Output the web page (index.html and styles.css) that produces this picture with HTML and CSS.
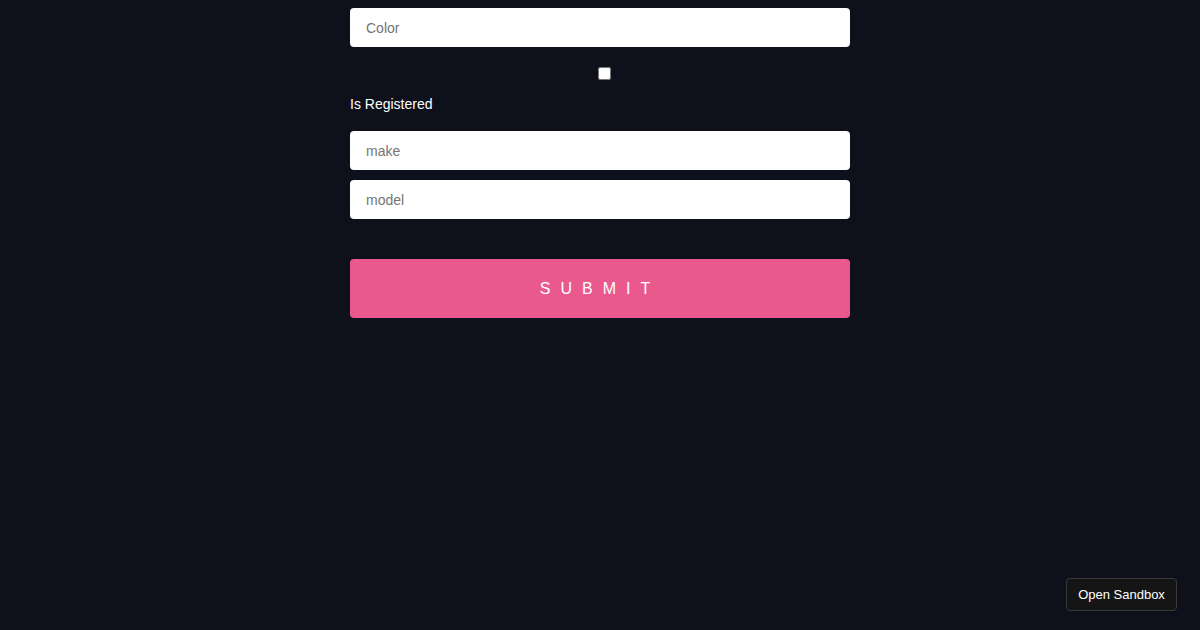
FILE: index.html
```html
<!DOCTYPE html>
<html>
<head>
<meta charset="utf-8">
<link rel="stylesheet" href="styles.css">
</head>
<body>
<form class="form">
  <input class="field" type="text" placeholder="Color">
  <div class="check-row"><input class="check" type="checkbox"></div>
  <label class="label">Is Registered</label>
  <input class="field" type="text" placeholder="make">
  <input class="field field-gap" type="text" placeholder="model">
  <button class="submit" type="button">SUBMIT</button>
</form>
<button class="sandbox" type="button">Open Sandbox</button>
</body>
</html>
```
FILE: styles.css
```css
html, body {
  margin: 0;
  padding: 0;
  background: #0e101b;
  height: 100%;
  font-family: "Liberation Sans", Arial, sans-serif;
}
.form {
  width: 500px;
  margin: 0 auto;
  padding-top: 8px;
  display: flex;
  flex-direction: column;
}
.field {
  box-sizing: border-box;
  height: 39px;
  width: 100%;
  border: none;
  border-radius: 4px;
  background: #fff;
  padding: 0 16px;
  font-family: "Liberation Sans", Arial, sans-serif;
  font-size: 14px;
  color: #333;
  margin: 0;
  outline: none;
}
.field::placeholder { color: #757575; }
.field-gap { margin-top: 10px; }
.check-row {
  display: flex;
  padding-left: 248px;
  margin-top: 20px;
  height: 13px;
}
.check {
  width: 13px;
  height: 13px;
  margin: 0;
}
.label {
  color: #fff;
  font-size: 14px;
  line-height: 16px;
  margin-top: 16px;
  margin-bottom: 19px;
}
.submit {
  margin-top: 40px;
  height: 59px;
  border: none;
  border-radius: 4px;
  background: #ea598e;
  color: #fff;
  font-family: "Liberation Sans", Arial, sans-serif;
  font-size: 16px;
  letter-spacing: 10px;
  padding: 0;
}
.sandbox {
  position: fixed;
  right: 23px;
  bottom: 19px;
  width: 111px;
  height: 33px;
  box-sizing: border-box;
  background: #151515;
  border: 1px solid #3a3a3a;
  border-radius: 4px;
  color: #fff;
  font-family: "Liberation Sans", Arial, sans-serif;
  font-size: 13px;
  padding: 0;
}
```
